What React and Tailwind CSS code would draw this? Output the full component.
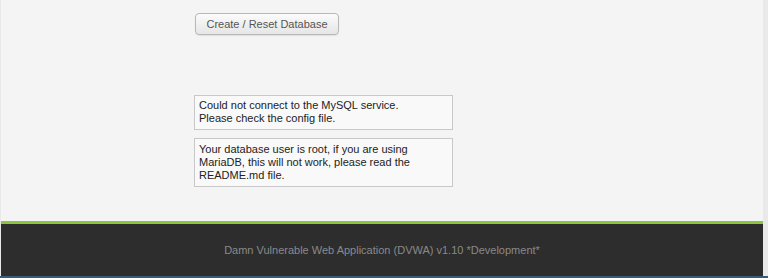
export default function App() {
    return (
        <div className="w-[768px] h-[278px] flex flex-col bg-[#e9e9e9] overflow-hidden" style={{ fontFamily: '"Liberation Sans", Arial, sans-serif' }}>
            <div className="flex-1 flex">
                <div className="w-[762px] ml-[1px] flex flex-col bg-[#f4f4f4]">

                    {/* Contenido */}
                    <div className="flex-1 pl-[193px] pt-[13px]">
                        <button
                            type="button"
                            className="block ml-[1px] h-[22px] w-[144px] rounded-[4px] border border-[#b8b8b8] bg-gradient-to-b from-[#fbfbfb] to-[#e6e6e6] text-[11px] text-[#555] shadow-[0_1px_1px_rgba(0,0,0,0.08)]"
                        >
                            Create / Reset Database
                        </button>

                        <div className="mt-[60px] w-[259px] border border-[#c8c8c8] bg-[#f9f9f9] px-[4px] pt-[3px] pb-[4px] text-[11px] leading-[13px] text-[#222]">
                            Could not connect to the MySQL service.<br />
                            Please check the config file.
                        </div>

                        <div className="mt-[8px] w-[259px] border border-[#c8c8c8] bg-[#f9f9f9] px-[4px] pt-[4px] pb-[4px] text-[11px] leading-[13px] text-[#222]">
                            Your database user is root, if you are using MariaDB, this will not work, please read the README.md file.
                        </div>
                    </div>

                    {/* Pie */}
                    <div className="h-[55px] border-t-[3px] border-[#8cc63f] bg-[#2d2d2d] flex items-center justify-center">
                        <p className="text-[11px] text-[#8a8a8a]">
                            Damn Vulnerable Web Application (DVWA) v1.10 *Development*
                        </p>
                    </div>
                </div>
            </div>
            <div className="h-[2px] bg-[#3d5a70]" />
        </div>
    );
}
